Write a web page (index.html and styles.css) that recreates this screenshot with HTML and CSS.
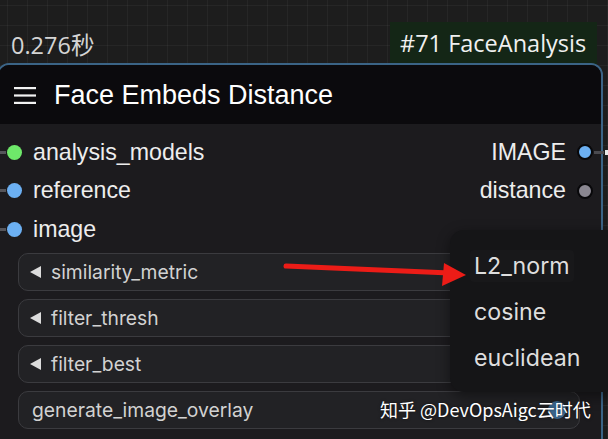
FILE: index.html
```html
<!DOCTYPE html>
<html lang="zh">
<head>
<meta charset="utf-8">
<title>Face Embeds Distance</title>
<link rel="stylesheet" href="styles.css">
</head>
<body>
<div class="canvas">
  <div class="timing">0.276秒</div>
  <div class="badge">#71 FaceAnalysis</div>

  <div class="node">
    <div class="node-header">
      <svg class="hamburger" width="22" height="17" viewBox="0 0 22 17">
        <rect x="0" y="0" width="22" height="2.2" fill="#f2f2f2"/>
        <rect x="0" y="7.4" width="22" height="2.2" fill="#f2f2f2"/>
        <rect x="0" y="14.8" width="22" height="2.2" fill="#f2f2f2"/>
      </svg>
      <span class="title">Face Embeds Distance</span>
    </div>
    <div class="node-body">
      <div class="slots">
        <div class="inputs">
          <div class="slot-row in"><span class="dot green"></span><span class="label">analysis_models</span></div>
          <div class="slot-row in"><span class="dot blue"></span><span class="label">reference</span></div>
          <div class="slot-row in"><span class="dot blue"></span><span class="label">image</span></div>
        </div>
        <div class="outputs">
          <div class="slot-row out"><span class="label">IMAGE</span><span class="dot blue ring"></span></div>
          <div class="slot-row out"><span class="label">distance</span><span class="dot grey ring"></span></div>
        </div>
      </div>
      <div class="widgets">
        <div class="widget"><span class="tri"></span><span>similarity_metric</span></div>
        <div class="widget"><span class="tri"></span><span>filter_thresh</span></div>
        <div class="widget"><span class="tri"></span><span>filter_best</span></div>
        <div class="widget toggle"><span>generate_image_overlay</span><span class="knob"></span></div>
      </div>
    </div>
  </div>

  <div class="stubs">
    <span class="stub s1"></span><span class="stub s2"></span><span class="stub s3"></span>
    <span class="link-out"></span>
  </div>

  <div class="menu">
    <div class="menu-item active"><span>L2_norm</span></div>
    <div class="menu-item"><span>cosine</span></div>
    <div class="menu-item"><span>euclidean</span></div>
  </div>

  <svg class="arrow" width="200" height="40" viewBox="0 0 200 40">
    <line x1="6" y1="12" x2="170" y2="19" stroke="#ec1c17" stroke-width="5" stroke-linecap="round"/>
    <polygon points="186,21 164,9 162,32" fill="#ec1c17"/>
  </svg>

  <div class="watermark">知乎 @DevOpsAigc云时代</div>
</div>
</body>
</html>
```

FILE: styles.css
```css
html, body {
  margin: 0;
  padding: 0;
}
body {
  width: 608px;
  height: 439px;
  overflow: hidden;
  background: #1b1b1b;
  font-family: "Liberation Sans", Arial, sans-serif;
}
.canvas {
  position: relative;
  width: 608px;
  height: 439px;
  overflow: hidden;
  background-color: #1d1d1d;
  background-image:
    linear-gradient(to right, rgba(255,255,255,0.04) 1px, transparent 1px),
    linear-gradient(to bottom, rgba(255,255,255,0.04) 1px, transparent 1px);
  background-size: 20px 20px;
  background-position: 7px 5px;
}
.timing {
  position: absolute;
  left: 11px;
  top: 29px;
  font-family: "Open Sans", "Noto Sans CJK SC", sans-serif;
  font-size: 23.5px;
  line-height: 32px;
  color: #d4d4d4;
}
.badge {
  position: absolute;
  left: 390px;
  top: 22px;
  width: 207px;
  height: 42px;
  box-sizing: border-box;
  padding-left: 10px;
  background: #142616;
  color: #f0f0f0;
  font-family: "Open Sans", sans-serif;
  font-size: 23.5px;
  line-height: 42px;
  white-space: nowrap;
}
.node {
  position: absolute;
  left: -3px;
  top: 63px;
  width: 602px;
  height: 420px;
  border: 2px solid #3b6486;
  border-radius: 12px;
  background: #1c1b1e;
  overflow: hidden;
}
.node-header {
  height: 59px;
  background: #0b0a0d;
  display: flex;
  align-items: center;
  padding-left: 15px;
  gap: 18px;
}
.hamburger {
  display: block;
  margin-top: 1px;
}
.title {
  color: #ffffff;
  font-size: 27px;
  line-height: 30px;
  white-space: nowrap;
}
.slots {
  display: flex;
  justify-content: space-between;
  padding-top: 9px;
}
.slot-row {
  height: 38.5px;
  display: flex;
  align-items: center;
  color: #ededed;
  font-size: 23.2px;
  white-space: nowrap;
}
.slot-row.in {
  padding-left: 8px;
  gap: 11px;
}
.slot-row.out {
  justify-content: flex-end;
  padding-right: 8px;
  gap: 11px;
}
.dot {
  width: 15px;
  height: 15px;
  border-radius: 50%;
  box-sizing: border-box;
  flex: none;
}
.dot.green { background: #6ee86a; }
.dot.blue { background: #6cb0f2; }
.dot.grey { background: #8a8791; }
.dot.ring { border: 2px solid #08080a; width: 16px; height: 16px; }
.widgets {
  display: flex;
  flex-direction: column;
  gap: 8px;
  padding: 4px 21px 0 19px;
}
.widget {
  height: 38px;
  box-sizing: border-box;
  border: 1.5px solid #3b3b3f;
  border-radius: 10px;
  background: #222225;
  display: flex;
  align-items: center;
  padding-left: 11px;
  gap: 10px;
  font-family: "Inter", sans-serif;
  font-size: 19.3px;
  color: #d2d2d2;
  white-space: nowrap;
}
.tri {
  width: 0;
  height: 0;
  border-top: 6px solid transparent;
  border-bottom: 6px solid transparent;
  border-right: 11px solid #dcdcdc;
}
.widget.toggle {
  padding-left: 13px;
  justify-content: space-between;
  padding-right: 13px;
}
.knob {
  width: 18px;
  height: 18px;
  border-radius: 50%;
  background: #3d6b93;
}
.stubs .stub {
  position: absolute;
  left: 0;
  width: 6px;
  height: 3px;
  background: #55555a;
}
.stubs .s1 { top: 151px; }
.stubs .s2 { top: 189px; }
.stubs .s3 { top: 228px; }
.link-out {
  position: absolute;
  left: 594px;
  top: 151px;
  width: 10px;
  height: 3px;
  background: #4a4a4f;
}
.link-out::after {
  content: "";
  position: absolute;
  left: 11px;
  top: -1px;
  width: 3px;
  height: 5px;
  background: #e8e8e8;
}
.menu {
  position: absolute;
  left: 450px;
  top: 230px;
  width: 180px;
  height: 162px;
  box-sizing: border-box;
  padding-top: 13px;
  background: #151517;
  border-radius: 14px;
  box-shadow: 0 4px 14px rgba(0,0,0,0.45);
  font-family: "Inter", sans-serif;
  font-size: 23.2px;
  color: #dedede;
}
.menu-item {
  height: 46px;
  display: flex;
  align-items: center;
  padding-left: 20px;
}
.menu-item span {
  padding: 2px 4px;
  border-radius: 4px;
}
.menu-item.active span {
  background: #18181a;
}
.arrow {
  position: absolute;
  left: 280px;
  top: 254px;
}
.watermark {
  position: absolute;
  left: 380px;
  top: 396px;
  font-family: "Noto Sans CJK SC", sans-serif;
  font-size: 18px;
  line-height: 26px;
  color: #ffffff;
  text-shadow: 0 0 3px rgba(0,0,0,0.6);
  white-space: nowrap;
}
```
